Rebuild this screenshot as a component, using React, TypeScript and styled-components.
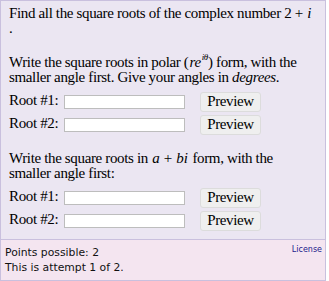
import React from 'react';
import styled, { createGlobalStyle } from 'styled-components';

const GlobalStyle = createGlobalStyle`
  body {
    margin: 0;
    background: #ffffff;
  }
`;

const Wrapper = styled.div`
  width: 324px;
  border: 1px solid #c9c0de;
  background-color: #ebe6f2;
  font-family: 'Liberation Serif', 'Times New Roman', serif;
  font-size: 15px;
  letter-spacing: -0.35px;
  color: #000;
`;

const Body = styled.div`
  padding: 5px 8px 7px 8px;
`;

const Para = styled.p<{ $gap?: number }>`
  margin: 0;
  line-height: 15px;
  margin-top: ${(p) => p.$gap || 0}px;
`;

const Math = styled.span`
  white-space: nowrap;
  letter-spacing: 0;
`;

const Var = styled.i`
  padding: 0 1px;
`;

const Plus = styled.span`
  padding: 0 3px;
`;

const Sup = styled.sup`
  font-size: 9px;
  font-style: italic;
  vertical-align: 7px;
  line-height: 0;
`;

const Row = styled.div<{ $first?: boolean }>`
  display: flex;
  align-items: center;
  height: 23px;
  margin-top: ${(p) => (p.$first ? 5 : 0)}px;
`;

const Label = styled.span`
  flex: none;
  width: 55px;
  white-space: nowrap;
  line-height: 15px;
  margin-top: -2px;
`;

const Input = styled.input`
  flex: none;
  box-sizing: border-box;
  width: 121px;
  height: 14px;
  padding: 0 2px;
  border: 1px solid #bdbdbd;
  background: #fff;
  margin: 1px 0 0 0;
`;

const Button = styled.button`
  flex: none;
  margin-left: 15px;
  width: 61px;
  height: 20px;
  padding: 0;
  font-family: 'Liberation Serif', serif;
  font-size: 15px;
  letter-spacing: -0.35px;
  line-height: 15px;
  color: #000;
  background: #efefef;
  border: 1px solid #dcdcdc;
  border-radius: 3px;
`;

const Footer = styled.div`
  position: relative;
  height: 30px;
  border-top: 1px solid #c9c0de;
  background-color: #f4e5f0;
  padding: 5px 4px 5px 4px;
  font-family: 'DejaVu Sans', Verdana, sans-serif;
  font-size: 10.8px;
  letter-spacing: 0;
  line-height: 15px;
  color: #111;
`;

const License = styled.a`
  position: absolute;
  right: 3px;
  top: 5px;
  font-size: 8px;
  line-height: 10px;
  color: #1a1a8c;
  text-decoration: none;
`;

function AnswerRow({ n, first }: { n: number; first?: boolean }) {
  return (
    <Row $first={first}>
      <Label>Root #{n}:</Label>
      <Input type="text" />
      <Button>Preview</Button>
    </Row>
  );
}

export default function App() {
  return (
    <>
      <GlobalStyle />
      <Wrapper>
        <Body>
          <Para>
            Find all the square roots of the complex number{' '}
            <Math>
              2<Plus>+</Plus>
              <Var>i</Var>
            </Math>
          </Para>
          <Para>.</Para>
          <Para $gap={19}>
            Write the square roots in polar (
            <Var>re</Var>
            <Sup>iθ</Sup>) form, with the smaller angle first. Give your angles in <i>degrees</i>.
          </Para>
          <AnswerRow n={1} first />
          <AnswerRow n={2} />
          <Para $gap={15}>
            Write the square roots in{' '}
            <Math>
              <Var>a</Var>
              <Plus>+</Plus>
              <Var>bi</Var>
            </Math>{' '}
            form, with the smaller angle first:
          </Para>
          <AnswerRow n={1} first />
          <AnswerRow n={2} />
        </Body>
        <Footer>
          <License href="#">License</License>
          <div>Points possible: 2</div>
          <div>This is attempt 1 of 2.</div>
        </Footer>
      </Wrapper>
    </>
  );
}
